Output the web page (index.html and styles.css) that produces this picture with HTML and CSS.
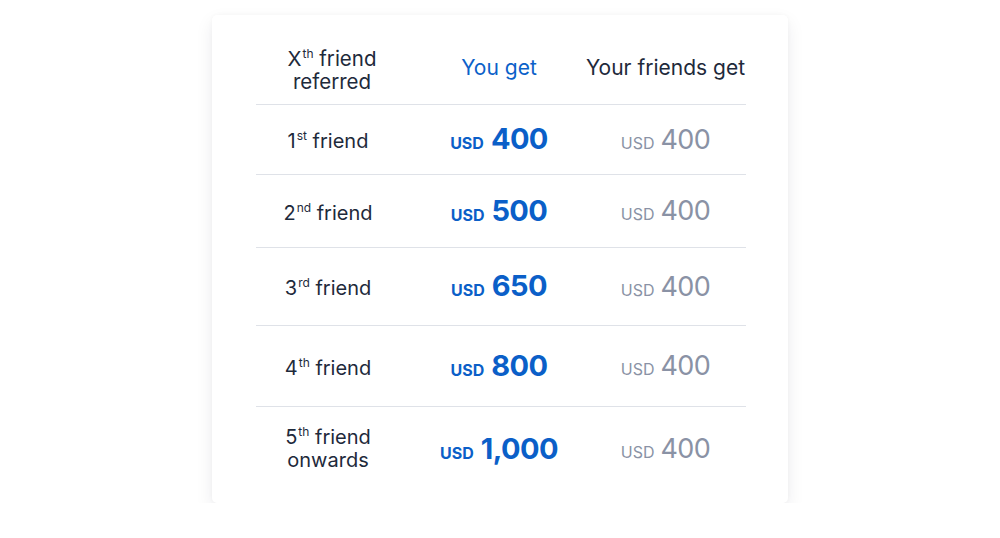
FILE: index.html
```html
<!DOCTYPE html>
<html lang="en">
<head>
<meta charset="utf-8">
<title>Referral rewards</title>
<link rel="stylesheet" href="styles.css">
</head>
<body>
<div class="card">
  <div class="row head">
    <div class="cell c1">X<sup>th</sup> friend<br>referred</div>
    <div class="cell c2 blue-head">You get</div>
    <div class="cell c3">Your friends get</div>
  </div>
  <div class="row r1">
    <div class="cell c1 lower">1<sup>st</sup> friend</div>
    <div class="cell c2"><span class="cur">USD</span><span class="amt">400</span></div>
    <div class="cell c3"><span class="gcur">USD</span><span class="gamt">400</span></div>
  </div>
  <div class="row r2">
    <div class="cell c1 lower">2<sup>nd</sup> friend</div>
    <div class="cell c2"><span class="cur">USD</span><span class="amt">500</span></div>
    <div class="cell c3"><span class="gcur">USD</span><span class="gamt">400</span></div>
  </div>
  <div class="row r3">
    <div class="cell c1 lower">3<sup>rd</sup> friend</div>
    <div class="cell c2"><span class="cur">USD</span><span class="amt">650</span></div>
    <div class="cell c3"><span class="gcur">USD</span><span class="gamt">400</span></div>
  </div>
  <div class="row r4">
    <div class="cell c1 lower">4<sup>th</sup> friend</div>
    <div class="cell c2"><span class="cur">USD</span><span class="amt">800</span></div>
    <div class="cell c3"><span class="gcur">USD</span><span class="gamt">400</span></div>
  </div>
  <div class="row r5">
    <div class="cell c1">5<sup>th</sup> friend<br>onwards</div>
    <div class="cell c2"><span class="cur">USD</span><span class="amt">1,000</span></div>
    <div class="cell c3"><span class="gcur">USD</span><span class="gamt">400</span></div>
  </div>
</div>
</body>
</html>
```
FILE: styles.css
```css
* { box-sizing: border-box; }
body {
  margin: 0;
  background: #ffffff;
  font-family: Inter, "Noto Sans", "Liberation Sans", sans-serif;
  color: #1e2a3b;
}
.card {
  width: 576px;
  margin: 15px auto 0;
  padding: 0 42px 12px 44px;
  background: #ffffff;
  border-radius: 5px;
  box-shadow: 0 7px 18px rgba(20, 30, 50, 0.08), 0 0 4px rgba(20, 30, 50, 0.03);
}
.row {
  display: grid;
  grid-template-columns: 144px 185px 161px;
  align-items: center;
  border-top: 1px solid #dfe2e8;
}
.row.head {
  border-top: none;
  height: 89px;
  padding: 30px 0 10px;
}
.r1 { height: 70px; }
.r2 { height: 73px; }
.r3 { height: 78px; }
.r4 { height: 81px; }
.r5 { height: 85px; }
.cell {
  text-align: center;
  font-size: 20px;
  line-height: 23px;
  white-space: nowrap;
}
.head .cell { font-size: 21px; }
.head .c1 { padding-left: 8px; font-size: 20.5px; }
.lower { padding-top: 4px; }
.c2 { padding-left: 13px; }
.head .c2, .head .c3 { margin-top: -4px; }
.blue-head { color: #0b61c9; }
sup {
  font-size: 12px;
  line-height: 0;
  vertical-align: 8px;
  margin-left: 1px;
}
.cur {
  color: #0b5fc8;
  font-size: 16px;
  font-weight: 700;
  margin-right: 7px;
}
.amt {
  color: #0b5fc8;
  font-size: 29px;
  font-weight: 700;
  line-height: 30px;
  letter-spacing: -0.6px;
}
.gcur {
  color: #8a92a5;
  font-size: 16px;
  margin-right: 6px;
}
.gamt {
  color: #8a92a5;
  font-size: 27px;
  line-height: 30px;
  letter-spacing: -0.6px;
}
```
